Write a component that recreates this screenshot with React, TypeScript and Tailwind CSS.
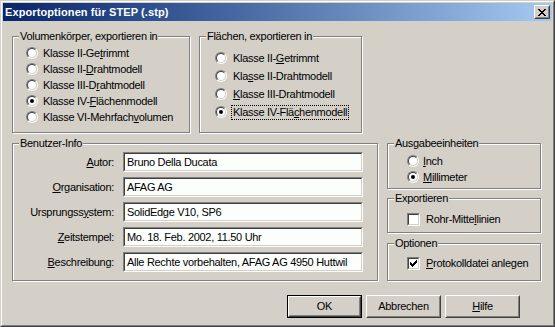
import React from "react";

// Text mit "&" vor dem Zugriffsbuchstaben, wie in Windows-Ressourcen
const Mn: React.FC<{ t: string }> = ({ t }) => {
  const i = t.indexOf("&");
  if (i < 0) return <>{t}</>;
  return (
    <>
      {t.slice(0, i)}
      <span className="underline underline-offset-1 decoration-1">{t[i + 1]}</span>
      {t.slice(i + 2)}
    </>
  );
};

const Radio: React.FC<{ on?: boolean }> = ({ on }) => (
  <span className="flex-none flex w-[12px] h-[12px] rounded-full border border-t-[#808080] border-l-[#808080] border-r-white border-b-white">
    <span className="flex-1 flex items-center justify-center rounded-full border border-t-[#404040] border-l-[#404040] border-r-[#d4d0c8] border-b-[#d4d0c8] bg-white">
      {on && <span className="w-[4px] h-[4px] rounded-full bg-black" />}
    </span>
  </span>
);

const Check: React.FC<{ on?: boolean }> = ({ on }) => (
  <span className="flex-none flex w-[13px] h-[13px] border border-t-[#808080] border-l-[#808080] border-r-white border-b-white">
    <span className="flex-1 flex items-center justify-center border border-t-[#404040] border-l-[#404040] border-r-[#d4d0c8] border-b-[#d4d0c8] bg-white">
      {on && (
        <svg width="7" height="7" viewBox="0 0 7 7" shapeRendering="crispEdges">
          <path
            fill="#000"
            d="M6 0h1v1h-1z M5 1h2v1h-2z M0 2h1v1h-1z M4 2h3v1h-3z M0 3h2v1h-2z M3 3h3v1h-3z M0 4h5v1h-5z M1 5h3v1h-3z M2 6h1v1h-1z"
          />
        </svg>
      )}
    </span>
  </span>
);

const Group: React.FC<{ title: string; className?: string; children?: React.ReactNode }> = ({
  title,
  className = "",
  children,
}) => (
  <div className={`border border-[#808080] shadow-[inset_1px_1px_0_#fff,1px_1px_0_#fff] ${className}`}>
    <div className="-mt-[7px] ml-[6px] w-fit px-[1px] bg-[#d4d0c8] leading-[13px]">{title}</div>
    {children}
  </div>
);

const Field: React.FC<{ label: string; value: string }> = ({ label, value }) => (
  <div className="flex items-center h-[20px]">
    <span className="w-[101px] text-right">
      <Mn t={label} />
    </span>
    <div className="ml-[9px] w-[240px] h-[20px] flex border border-t-[#808080] border-l-[#808080] border-r-white border-b-white">
      <div className="flex-1 flex items-center pl-[2px] overflow-hidden whitespace-nowrap bg-[#fcfefc] border border-t-[#404040] border-l-[#404040] border-r-[#d4d0c8] border-b-[#d4d0c8]">
        {value}
      </div>
    </div>
  </div>
);

const Btn: React.FC<{ def?: boolean; children: React.ReactNode }> = ({ def, children }) => (
  <div className={`w-[75px] h-[23px] flex ${def ? "border border-black" : ""}`}>
    <div className="flex-1 flex border border-t-white border-l-white border-r-[#404040] border-b-[#404040]">
      <div className="flex-1 flex items-center justify-center border border-t-[#d4d0c8] border-l-[#d4d0c8] border-r-[#808080] border-b-[#808080]">
        {children}
      </div>
    </div>
  </div>
);

const volumen = [
  "Klasse II-Ge&trimmt",
  "Klasse II-&Drahtmodell",
  "Klasse III-D&rahtmodell",
  "Klasse IV-&Flächenmodell",
  "Klasse VI-Mehrfach&volumen",
];

const flaechen = [
  "Klasse II-&Getrimmt",
  "Kla&sse II-Drahtmodell",
  "&Klasse III-Drahtmodell",
  "Klasse IV-Flä&chenmodell",
];

const info = [
  { label: "&Autor:", value: "Bruno Della Ducata" },
  { label: "&Organisation:", value: "AFAG AG" },
  { label: "Ursprungss&ystem:", value: "SolidEdge V10, SP6" },
  { label: "&Zeitstempel:", value: "Mo. 18. Feb. 2002, 11.50 Uhr" },
  { label: "&Beschreibung:", value: "Alle Rechte vorbehalten, AFAG AG 4950 Huttwil" },
];

export default function App() {
  return (
    <div className="w-[555px] h-[327px] overflow-hidden bg-[#d4d0c8] text-black text-[11px] leading-[13px] tracking-[-0.3px] font-['Liberation_Sans',Arial,sans-serif] border border-t-[#d4d0c8] border-l-[#d4d0c8] border-r-[#404040] border-b-[#404040]">
      <div className="h-full flex flex-col p-px border border-t-white border-l-white border-r-[#808080] border-b-[#808080]">
        {/* Titelleiste */}
        <div className="h-[18px] flex-none flex items-center px-[2px] bg-linear-to-r from-[#0a246a] to-[#a6caf0]">
          <span className="text-white font-bold text-[11px] tracking-[0.1px]">Exportoptionen für STEP (.stp)</span>
          <div className="ml-auto w-[16px] h-[14px] flex border border-t-white border-l-white border-r-[#404040] border-b-[#404040]">
            <div className="flex-1 flex items-center justify-center bg-[#d4d0c8] border border-t-[#d4d0c8] border-l-[#d4d0c8] border-r-[#808080] border-b-[#808080]">
              <svg width="8" height="7" viewBox="0 0 8 7" shapeRendering="crispEdges">
                <path
                  fill="#000"
                  d="M0 0h2v1h-2z M6 0h2v1h-2z M1 1h2v1h-2z M5 1h2v1h-2z M2 2h4v1h-4z M3 3h2v1h-2z M2 4h4v1h-4z M1 5h2v1h-2z M5 5h2v1h-2z M0 6h2v1h-2z M6 6h2v1h-2z"
                />
              </svg>
            </div>
          </div>
        </div>

        <div className="flex-1 px-[9px]">
          {/* Obere Gruppen */}
          <div className="mt-[15px] flex gap-[9px]">
            <Group title="Volumenkörper, exportieren in" className="w-[178px] h-[97px]">
              <div className="mt-[2px] flex flex-col">
                {volumen.map((t, i) => (
                  <div key={t} className="h-[16px] flex items-center gap-[5px] pl-[13px]">
                    <Radio on={i === 3} />
                    <span>
                      <Mn t={t} />
                    </span>
                  </div>
                ))}
              </div>
            </Group>
            <Group title="Flächen, exportieren in" className="w-[163px] h-[97px]">
              <div className="mt-[6px] flex flex-col">
                {flaechen.map((t, i) => (
                  <div key={t} className="h-[18px] flex items-center gap-[4px] pl-[15px]">
                    <Radio on={i === 3} />
                    <span
                      className={`px-px border ${i === 3 ? "border-dotted border-black" : "border-transparent"}`}
                    >
                      <Mn t={t} />
                    </span>
                  </div>
                ))}
              </div>
            </Group>
          </div>

          {/* Benutzer-Info und rechte Spalte */}
          <div className="mt-[10px] flex gap-[9px]">
            <Group title="Benutzer-Info" className="w-[366px] h-[138px]">
              <div className="mt-[2px] flex flex-col gap-[5px]">
                {info.map((f) => (
                  <Field key={f.label} label={f.label} value={f.value} />
                ))}
              </div>
            </Group>

            <div className="w-[154px] flex flex-col">
              <Group title="Ausgabeeinheiten" className="h-[46px]">
                <div className="mt-[3px] flex flex-col">
                  <div className="h-[16px] flex items-center gap-[4px] pl-[19px]">
                    <Radio />
                    <span>
                      <Mn t="&Inch" />
                    </span>
                  </div>
                  <div className="h-[16px] flex items-center gap-[4px] pl-[19px]">
                    <Radio on />
                    <span>
                      <Mn t="&Millimeter" />
                    </span>
                  </div>
                </div>
              </Group>
              <Group title="Exportieren" className="mt-[9px] h-[35px]">
                <div className="mt-[6px] h-[16px] flex items-center gap-[6px] pl-[19px]">
                  <Check />
                  <span>
                    <Mn t="Rohr-Mitte&llinien" />
                  </span>
                </div>
              </Group>
              <Group title="Optionen" className="mt-[10px] h-[38px]">
                <div className="mt-[5px] h-[16px] flex items-center gap-[6px] pl-[19px]">
                  <Check on />
                  <span>
                    <Mn t="&Protokolldatei anlegen" />
                  </span>
                </div>
              </Group>
            </div>
          </div>

          {/* Schaltflächen */}
          <div className="mt-[14px] flex justify-end gap-[4px] pr-[23px]">
            <Btn def>OK</Btn>
            <Btn>Abbrechen</Btn>
            <Btn>
              <Mn t="&Hilfe" />
            </Btn>
          </div>
        </div>
      </div>
    </div>
  );
}
